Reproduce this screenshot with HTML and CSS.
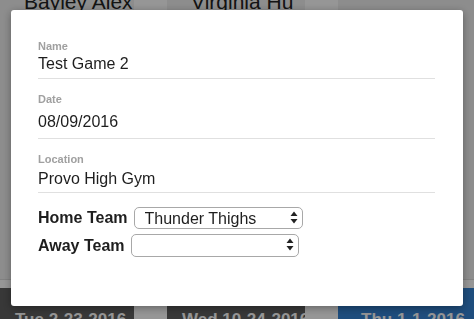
FILE: index.html
```html
<!DOCTYPE html>
<html lang="en">
  <head>
    <meta charset="UTF-8" />
    <meta name="viewport" content="width=device-width, initial-scale=1.0" />
    <title>Edit Game</title>
    <link rel="stylesheet" href="styles.css">
  </head>

  <body>
    <div class="page">
      <div class="row">
        <div class="card"><h3>Bayley Alex</h3></div>
        <div class="card"><h3>Virginia Hu</h3></div>
        <div class="card"></div>
      </div>
      <div class="row row-days">
        <div class="day">Tue 2-23-2016</div>
        <div class="day">Wed 10-24-2016</div>
        <div class="day active">Thu 1-1-2016</div>
      </div>
    </div>

    <div class="overlay">
      <form class="modal">
        <div class="field">
          <label for="name">Name</label>
          <input type="text" id="name" value="Test Game 2" />
        </div>

        <div class="field field-date">
          <label for="date">Date</label>
          <input type="text" id="date" value="08/09/2016" />
        </div>

        <div class="field field-location">
          <label for="location">Location</label>
          <input type="text" id="location" value="Provo High Gym" />
        </div>

        <div class="team">
          <label for="home">Home Team</label>
          <span class="select home">
            <select id="home">
              <option>Thunder Thighs</option>
            </select>
            <svg width="8" height="13" viewBox="0 0 8 13">
              <path d="M4 0.5 L7.5 5 L0.5 5 Z M4 12.5 L7.5 8 L0.5 8 Z" fill="#222" />
            </svg>
          </span>
        </div>

        <div class="team">
          <label for="away">Away Team</label>
          <span class="select away">
            <select id="away">
              <option></option>
            </select>
            <svg width="8" height="13" viewBox="0 0 8 13">
              <path d="M4 0.5 L7.5 5 L0.5 5 Z M4 12.5 L7.5 8 L0.5 8 Z" fill="#222" />
            </svg>
          </span>
        </div>
      </form>
    </div>
  </body>
</html>
```

FILE: styles.css
```css
* {
  margin: 0;
  padding: 0;
  box-sizing: border-box;
}

body {
  font-family: "Liberation Sans", Arial, sans-serif;
  background-color: #ffffff;
  overflow: hidden;
}

.page {
  height: 319px;
  overflow: hidden;
}

.row {
  display: grid;
  grid-template-columns: 134px 138px 1fr;
  column-gap: 33px;
}

.card {
  background-color: #f0f0f0;
  height: 280px;
  padding: 0 24px;
  border-bottom: 1px solid #dcdcdc;
  overflow: hidden;
}

.card h3 {
  font-size: 21px;
  font-weight: normal;
  line-height: 20px;
  color: #222;
  white-space: nowrap;
  margin-top: -8px;
}

.row-days {
  margin-top: 8px;
}

.day {
  background-color: #5f5f5f;
  color: #ffffff;
  font-weight: bold;
  font-size: 17px;
  height: 31px;
  padding: 22px 15px 0;
  white-space: nowrap;
  overflow: hidden;
}

.day.active {
  background-color: #3483d4;
  padding-left: 23px;
}

.overlay {
  position: fixed;
  top: 0;
  left: 0;
  right: 0;
  bottom: 0;
  background-color: rgba(0, 0, 0, 0.41);
  padding: 10px 11px;
}

.modal {
  background-color: #fff;
  height: 296px;
  border-radius: 3px;
  box-shadow: 0 2px 8px rgba(0, 0, 0, 0.35);
  padding: 29px 28px 0 27px;
}

.field {
  border-bottom: 1px solid #e0e0e0;
  padding-bottom: 4px;
  margin-bottom: 13px;
}

.field label {
  display: block;
  font-size: 11px;
  line-height: 14px;
  font-weight: bold;
  color: #a0a0a0;
  margin-bottom: 1px;
}

.field input {
  display: block;
  width: 100%;
  border: none;
  outline: none;
  font-family: inherit;
  font-size: 16px;
  line-height: 20px;
  height: 20px;
  color: #1e1e1e;
}

.field-date label {
  margin-bottom: 6px;
}

.field-date {
  padding-bottom: 6px;
}

.field-location label {
  margin-bottom: 3px;
}

.field-location {
  padding-bottom: 3px;
  margin-bottom: 14px;
}

.team {
  display: flex;
  align-items: center;
  gap: 6px;
  margin-bottom: 5px;
}

.team label {
  font-size: 16px;
  font-weight: bold;
  color: #1e1e1e;
}

.select {
  position: relative;
  display: block;
}

.select select {
  appearance: none;
  -webkit-appearance: none;
  display: block;
  width: 169px;
  height: 22px;
  border: 1px solid #a8a8a8;
  border-radius: 5px;
  background-color: #fff;
  font-family: inherit;
  font-size: 16px;
  color: #1e1e1e;
  padding: 0 10px;
}

.select.away select {
  height: 23px;
  width: 168px;
}

.select svg {
  position: absolute;
  right: 5px;
  top: 4px;
}
```
